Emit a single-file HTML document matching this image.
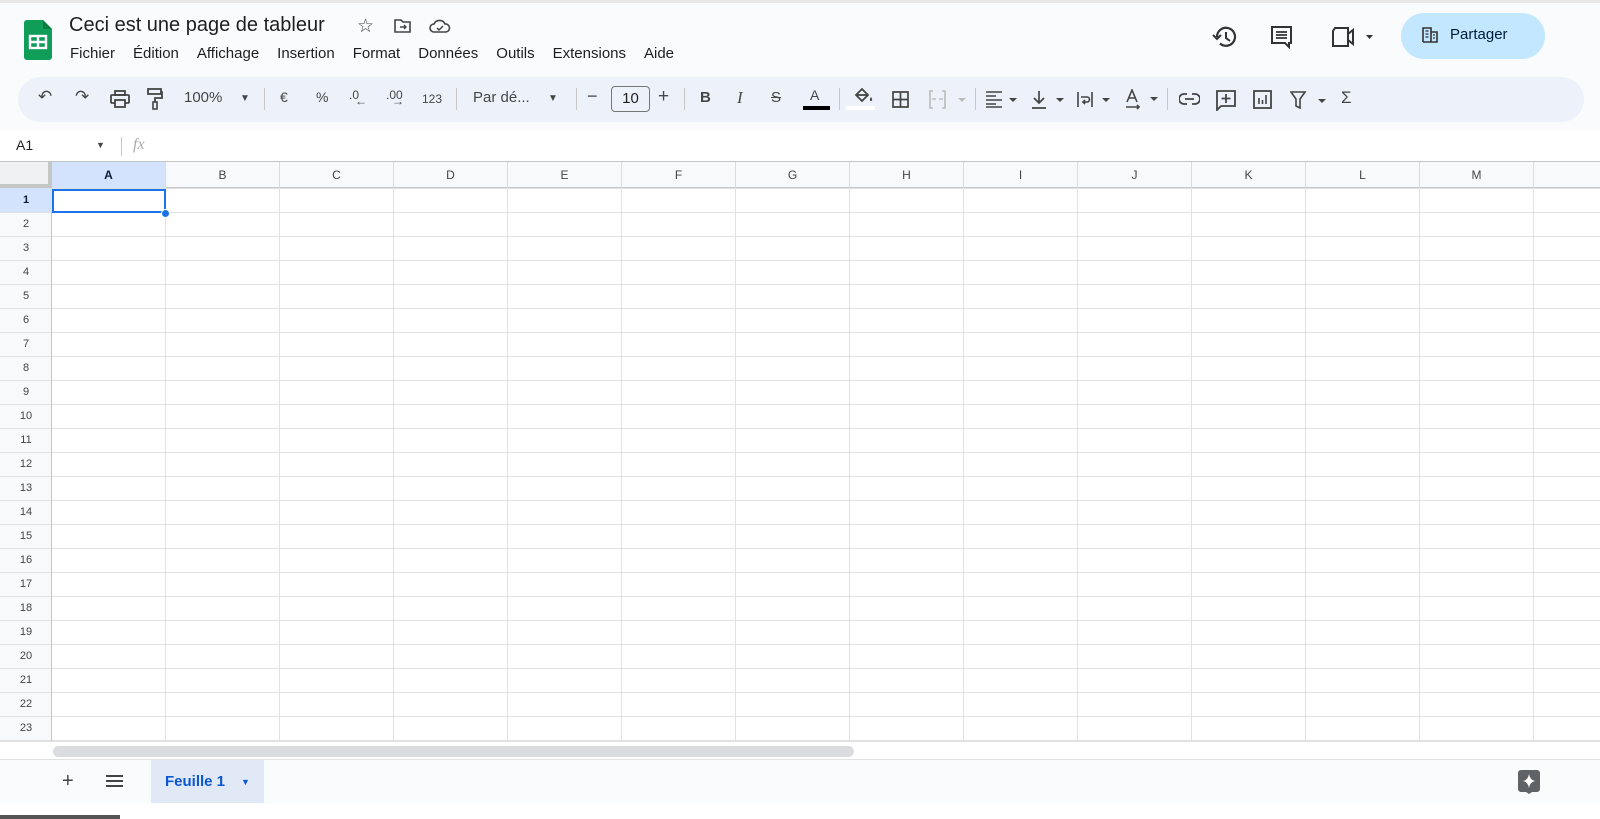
<!DOCTYPE html>
<html><head><meta charset="utf-8"><style>
*{margin:0;padding:0;box-sizing:border-box}
body{width:1600px;height:819px;overflow:hidden;background:#f9fbfd;font-family:"Liberation Sans",Arial,sans-serif;color:#1f1f1f;position:relative}
.a{position:absolute}
.menu span{margin-right:18px;font-size:15px}
.tb{position:absolute;top:77px;left:18px;width:1566px;height:45px;background:#edf2fa;border-radius:23px}
.i{position:absolute;top:89px;font-size:14px;color:#444746}
.sep{position:absolute;top:88px;width:1px;height:22px;background:#c7c7c7}
.ch{position:absolute;top:162px;height:26px;font-size:12px;color:#444;text-align:center;line-height:27px;border-right:1px solid #dadce0;width:114px}
.rh{position:absolute;left:0;width:52px;height:24px;font-size:11px;text-align:center;line-height:24px;color:#444}
</style></head><body>
<div class="a" style="left:0;top:0;width:1600px;height:3px;background:#e8e8e8"></div>
<!-- logo -->
<svg class="a" style="left:24px;top:20px" width="28" height="40" viewBox="0 0 28 40"><path d="M3 0h16l9 9v28a3 3 0 0 1-3 3H3a3 3 0 0 1-3-3V3a3 3 0 0 1 3-3z" fill="#0f9d58"/><path d="M19 0l9 9h-9z" fill="#087f3f"/><rect x="6" y="16" width="16" height="12" fill="none" stroke="#fff" stroke-width="2.4"/><path d="M14 16v12M6 22h16" stroke="#fff" stroke-width="2.4"/></svg>
<div class="a" style="left:69px;top:14px;font-size:20px">Ceci est une page de tableur</div>
<div class="a" style="left:357px;top:15px;font-size:19px;color:#444">☆</div>
<svg class="a" style="left:394px;top:18px" width="18" height="16" viewBox="0 0 18 16"><path d="M1 2h6l2 2h7v10H1z" fill="none" stroke="#444" stroke-width="1.6"/><path d="M6 9h6M10 7l2 2-2 2" fill="none" stroke="#444" stroke-width="1.4"/></svg>
<svg class="a" style="left:429px;top:18px" width="22" height="16" viewBox="0 0 22 16"><path d="M5 14a4 4 0 0 1 0-8 6 6 0 0 1 11 0 4 4 0 0 1 1 8z" fill="none" stroke="#444" stroke-width="1.6"/><path d="M8 10l2 2 4-4" fill="none" stroke="#444" stroke-width="1.5"/></svg>
<div class="a menu" style="left:70px;top:45px"><span>Fichier</span><span>Édition</span><span>Affichage</span><span>Insertion</span><span>Format</span><span>Données</span><span>Outils</span><span>Extensions</span><span>Aide</span></div>
<!-- right icons -->
<svg class="a" style="left:1212px;top:24px" width="26" height="26" viewBox="0 0 26 26"><path d="M5 13a9 9 0 1 1 3 6.5" fill="none" stroke="#333" stroke-width="2.2"/><path d="M1 11l4 4 4-4" fill="none" stroke="#333" stroke-width="2"/><path d="M14 8v6l4 3" fill="none" stroke="#333" stroke-width="2"/></svg>
<svg class="a" style="left:1270px;top:25px" width="24" height="24" viewBox="0 0 24 24"><path d="M2 2h19v16h-2v4l-4-4H2z" fill="none" stroke="#333" stroke-width="2"/><path d="M6 7h11M6 10h11M6 13h11" stroke="#333" stroke-width="1.8"/></svg>
<svg class="a" style="left:1331px;top:26px" width="46" height="22" viewBox="0 0 46 22"><path d="M4 2h13v18H2V5z" fill="none" stroke="#333" stroke-width="2"/><path d="M17 8l5-4v14l-5-4" fill="none" stroke="#333" stroke-width="2"/><path d="M35 9h7l-3.5 4z" fill="#333"/></svg>
<div class="a" style="left:1401px;top:13px;width:144px;height:46px;border-radius:23px;background:#c2e7ff"></div>
<svg class="a" style="left:1422px;top:27px" width="16" height="16" viewBox="0 0 16 16"><path d="M1 15V1h8v14M9 5h6v10H1" fill="none" stroke="#333" stroke-width="1.6"/><path d="M3.5 4h3M3.5 7h3M3.5 10h3M11 8h2M11 11h2" stroke="#333" stroke-width="1.3"/></svg>
<div class="a" style="left:1450px;top:26px;font-size:15px;color:#001d35">Partager</div>
<!-- toolbar -->
<div class="tb"></div>
<div class="i" style="left:38px;font-size:17px;top:87px">↶</div>
<div class="i" style="left:75px;font-size:17px;top:87px">↷</div>
<svg class="a" style="left:110px;top:90px" width="20" height="18" viewBox="0 0 20 18"><rect x="5" y="1" width="10" height="4" fill="none" stroke="#444" stroke-width="1.8"/><rect x="1" y="5" width="18" height="8" rx="1" fill="none" stroke="#444" stroke-width="1.8"/><rect x="5" y="10" width="10" height="7" fill="#edf2fa" stroke="#444" stroke-width="1.8"/></svg>
<svg class="a" style="left:147px;top:88px" width="16" height="22" viewBox="0 0 16 22"><rect x="1" y="1" width="13" height="5" fill="none" stroke="#444" stroke-width="1.8"/><path d="M14 4h1v6H8v4" fill="none" stroke="#444" stroke-width="1.8"/><rect x="6" y="14" width="4" height="7" fill="none" stroke="#444" stroke-width="1.6"/></svg>
<div class="i" style="left:184px;font-size:15px">100%</div><div class="i" style="left:240px;font-size:10px;top:93px">▼</div>
<div class="sep" style="left:264px"></div>
<div class="i" style="left:280px">€</div>
<div class="i" style="left:316px">%</div>
<div class="i" style="left:349px;font-size:12px;top:88px">.0<br><span style="position:relative;top:-8px;left:6px">←</span></div>
<div class="i" style="left:386px;font-size:12px;top:88px">.00<br><span style="position:relative;top:-8px;left:6px">→</span></div>
<div class="i" style="left:422px;font-size:12px;top:92px">123</div>
<div class="sep" style="left:456px"></div>
<div class="i" style="left:473px;font-size:15px">Par dé...</div><div class="i" style="left:548px;font-size:10px;top:93px">▼</div>
<div class="sep" style="left:576px"></div>
<div class="i" style="left:587px;font-size:18px;top:86px">−</div>
<div class="a" style="left:611px;top:86px;width:39px;height:26px;border:1px solid #747775;border-radius:4px;text-align:center;font-size:15px;line-height:24px">10</div>
<div class="i" style="left:658px;font-size:19px;top:86px">+</div>
<div class="sep" style="left:684px"></div>
<div class="i" style="left:700px;font-weight:bold;font-size:15px">B</div>
<div class="i" style="left:737px;font-style:italic;font-family:'Liberation Serif',serif;font-size:17px;top:88px">I</div>
<div class="i" style="left:771px;font-size:15px;text-decoration:line-through">S</div>
<div class="i" style="left:810px;font-size:14px;top:87px">A</div><div class="a" style="left:803px;top:106px;width:27px;height:4px;background:#000"></div>
<div class="sep" style="left:839px"></div>
<svg class="a" style="left:852px;top:87px" width="22" height="18" viewBox="0 0 22 18"><path d="M4 8l6-6 6 6-6 6z" fill="none" stroke="#444" stroke-width="1.8"/><path d="M4 8h12" stroke="#444" stroke-width="1.8"/><path d="M19 10c-1.5 2-1.5 4 0 4s1.5-2 0-4z" fill="#444"/></svg>
<div class="a" style="left:846px;top:106px;width:29px;height:4px;background:#fff"></div>
<svg class="a" style="left:892px;top:91px" width="17" height="17" viewBox="0 0 17 17"><path d="M1 1h15v15H1zM8.5 1v15M1 8.5h15" fill="none" stroke="#444" stroke-width="1.7"/></svg>
<svg class="a" style="left:929px;top:90px" width="40" height="19" viewBox="0 0 40 19"><path d="M4 1H1v17h3M13 1h3v17h-3M3 9h4M14 9h-4" fill="none" stroke="#bbb" stroke-width="1.6"/><path d="M29 8h8l-4 4z" fill="#bbb"/></svg>
<div class="sep" style="left:975px"></div>
<svg class="a" style="left:985px;top:91px" width="36" height="17" viewBox="0 0 36 17"><path d="M1 1h16M1 5h10M1 9h16M1 13h10M1 16h16" stroke="#444" stroke-width="1.6"/><path d="M24 7h8l-4 4z" fill="#444"/></svg>
<svg class="a" style="left:1030px;top:90px" width="38" height="19" viewBox="0 0 38 19"><path d="M9 1v12M4 8l5 5 5-5M2 18h14" fill="none" stroke="#444" stroke-width="1.7"/><path d="M26 8h8l-4 4z" fill="#444"/></svg>
<svg class="a" style="left:1076px;top:90px" width="38" height="19" viewBox="0 0 38 19"><path d="M2 2v15M16 2v15M5 7h6a2.5 2.5 0 0 1 0 5H7M9 10l-2 2 2 2" fill="none" stroke="#444" stroke-width="1.6"/><path d="M26 8h8l-4 4z" fill="#444"/></svg>
<svg class="a" style="left:1124px;top:89px" width="38" height="21" viewBox="0 0 38 21"><path d="M3 13l5-12 5 12M5 9h6M2 18h13M13 16l2 2-2 2" fill="none" stroke="#444" stroke-width="1.6"/><path d="M26 8h8l-4 4z" fill="#444"/></svg>
<div class="sep" style="left:1167px"></div>
<svg class="a" style="left:1179px;top:93px" width="21" height="12" viewBox="0 0 21 12"><path d="M8 1H5a5 5 0 0 0 0 10h3M13 1h3a5 5 0 0 1 0 10h-3M6 6h9" fill="none" stroke="#444" stroke-width="1.8"/></svg>
<svg class="a" style="left:1215px;top:89px" width="22" height="22" viewBox="0 0 22 22"><path d="M2 2h18v15H6l-4 4z" fill="none" stroke="#444" stroke-width="1.8"/><path d="M11 5v9M6.5 9.5h9" stroke="#444" stroke-width="1.8"/></svg>
<svg class="a" style="left:1253px;top:90px" width="19" height="19" viewBox="0 0 19 19"><rect x="1" y="1" width="17" height="17" fill="none" stroke="#444" stroke-width="1.8"/><path d="M6 8v6M9.5 10v4M13 5v9" stroke="#444" stroke-width="1.6"/></svg>
<svg class="a" style="left:1290px;top:91px" width="40" height="18" viewBox="0 0 40 18"><path d="M1 1h14l-5 7v9l-4-2V8z" fill="none" stroke="#444" stroke-width="1.6"/><path d="M28 8h8l-4 4z" fill="#444"/></svg>
<div class="i" style="left:1341px;font-size:17px;top:88px">Σ</div>
<!-- formula bar -->
<div class="a" style="left:0;top:130px;width:1600px;height:32px;background:#fff"></div>
<div class="a" style="left:16px;top:137px;font-size:14px">A1</div>
<div class="a" style="left:96px;top:140px;font-size:9px;color:#444">▼</div>
<div class="a" style="left:121px;top:137px;width:1px;height:19px;background:#c7c7c7"></div>
<div class="a" style="left:133px;top:136px;font-size:16px;font-style:italic;font-family:'Liberation Serif',serif;color:#aaa">fx</div>
<!-- grid -->
<div class="a" style="left:0;top:161px;width:1600px;height:583px;background-color:#fff;border-top:1px solid #c4c7c5;
background-image:linear-gradient(to right,#e1e1e1 1px,transparent 1px),linear-gradient(to bottom,#e1e1e1 1px,transparent 1px);
background-size:114px 24px,114px 24px;background-position:51px 26px,0 26px"></div>
<div class="a" style="left:0;top:162px;width:52px;height:582px;background:#f8f9fa;border-right:1px solid #c4c7c5;background-image:linear-gradient(to bottom,#e1e1e1 1px,transparent 1px);background-size:52px 24px;background-position:0 26px"></div>
<div class="a" style="left:0;top:162px;width:1600px;height:26px;background:#f8f9fa;border-bottom:1px solid #c4c7c5"></div>
<div class="a" style="left:0;top:162px;width:48px;height:22px;background:#eef0f2;border-right:4px solid #c4c7c5;border-bottom:4px solid #c4c7c5;width:52px;height:26px"></div>
<div class="ch" style="left:52px;background:#d3e3fd;font-weight:bold;color:#0b1b3a">A</div>
<div class="ch" style="left:166px">B</div><div class="ch" style="left:280px">C</div><div class="ch" style="left:394px">D</div><div class="ch" style="left:508px">E</div><div class="ch" style="left:622px">F</div><div class="ch" style="left:736px">G</div><div class="ch" style="left:850px">H</div><div class="ch" style="left:964px">I</div><div class="ch" style="left:1078px">J</div><div class="ch" style="left:1192px">K</div><div class="ch" style="left:1306px">L</div><div class="ch" style="left:1420px">M</div><div class="ch" style="left:1534px"></div>
<div class="rh" style="top:188px;background:#d3e3fd;font-weight:bold;color:#0b1b3a">1</div>
<div class="rh" style="top:212px">2</div><div class="rh" style="top:236px">3</div><div class="rh" style="top:260px">4</div><div class="rh" style="top:284px">5</div><div class="rh" style="top:308px">6</div><div class="rh" style="top:332px">7</div><div class="rh" style="top:356px">8</div><div class="rh" style="top:380px">9</div><div class="rh" style="top:404px">10</div><div class="rh" style="top:428px">11</div><div class="rh" style="top:452px">12</div><div class="rh" style="top:476px">13</div><div class="rh" style="top:500px">14</div><div class="rh" style="top:524px">15</div><div class="rh" style="top:548px">16</div><div class="rh" style="top:572px">17</div><div class="rh" style="top:596px">18</div><div class="rh" style="top:620px">19</div><div class="rh" style="top:644px">20</div><div class="rh" style="top:668px">21</div><div class="rh" style="top:692px">22</div><div class="rh" style="top:716px">23</div>
<div class="a" style="left:52px;top:189px;width:114px;height:24px;border:2px solid #1a73e8"></div>
<div class="a" style="left:161px;top:209px;width:9px;height:9px;border-radius:50%;background:#1a73e8;border:1px solid #fff"></div>
<!-- scrollbar -->
<div class="a" style="left:0;top:741px;width:1600px;height:19px;background:#fff;border-top:1px solid #e1e1e1"></div>
<div class="a" style="left:53px;top:746px;width:801px;height:11px;border-radius:6px;background:#dadce0"></div>
<!-- bottom bar -->
<div class="a" style="left:0;top:759px;width:1600px;height:44px;background:#f9fbfd;border-top:1px solid #e1e1e1"></div>
<div class="a" style="left:62px;top:770px;font-size:20px;color:#444">+</div>
<svg class="a" style="left:106px;top:775px" width="17" height="12" viewBox="0 0 17 12"><path d="M0 1h17M0 6h17M0 11h17" stroke="#444" stroke-width="2"/></svg>
<div class="a" style="left:151px;top:760px;width:113px;height:43px;background:#e1e9f7"></div>
<div class="a" style="left:165px;top:773px;font-size:15px;font-weight:bold;color:#0b57d0">Feuille 1</div>
<div class="a" style="left:241px;top:777px;font-size:9px;color:#0b57d0">▼</div>
<svg class="a" style="left:1518px;top:770px" width="22" height="24" viewBox="0 0 22 24"><path d="M3 0h16a3 3 0 0 1 3 3v16a3 3 0 0 1-3 3h-5l-3 2-3-2H3a3 3 0 0 1-3-3V3a3 3 0 0 1 3-3z" fill="#5f6368"/><path d="M11 4q1 6 6 7q-5 1-6 7q-1-6-6-7q5-1 6-7z" fill="#fff"/></svg>
<div class="a" style="left:0;top:803px;width:1600px;height:16px;background:#fff"></div>
<div class="a" style="left:0;top:815px;width:120px;height:4px;background:#555"></div>
</body></html>
